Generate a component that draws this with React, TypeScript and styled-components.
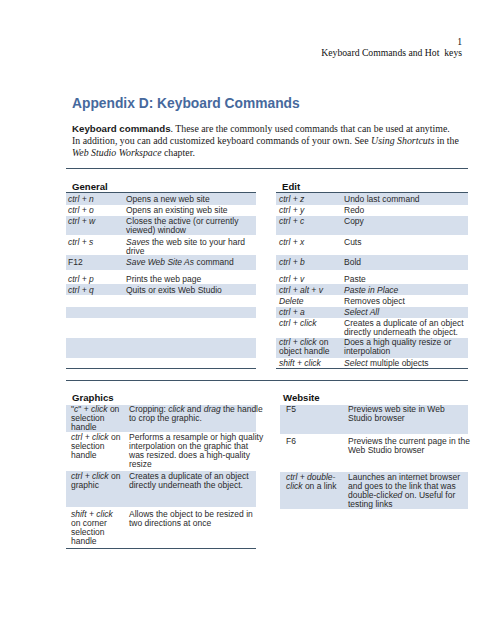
import React from "react";
import styled, { createGlobalStyle } from "styled-components";

const Global = createGlobalStyle`
  html, body { margin: 0; padding: 0; background: #ffffff; }
  body { font-family: "Liberation Serif", "Times New Roman", serif; color: #1a1a1a; }
`;

const Page = styled.div`
  width: 498px;
  height: 640px;
  box-sizing: border-box;
  padding: 37px 30px 0 66px;
  overflow: hidden;
  background: #fff;
`;

const RunningHead = styled.header`
  text-align: right;
  padding-right: 6px;
  font-family: "Liberation Serif", "Times New Roman", serif;
  font-size: 9.7px;
  line-height: 10.8px;
  color: #111;
  white-space: pre;
`;

const Title = styled.h1`
  margin: 37px 0 0 6px;
  font-family: "Liberation Sans", Arial, sans-serif;
  font-weight: bold;
  font-size: 13.8px;
  line-height: 16px;
  color: #46699d;
`;

const Intro = styled.p`
  margin: 11px 0 0 6px;
  font-family: "Liberation Serif", "Times New Roman", serif;
  font-size: 9.85px;
  line-height: 12.3px;
  color: #1a1a1a;
  white-space: nowrap;
`;

const Lead = styled.b`
  font-family: "Liberation Sans", Arial, sans-serif;
  font-weight: bold;
  font-size: 9.7px;
`;

const Rule = styled.hr<{ $top: number }>`
  margin: ${(p) => p.$top}px 0 0 0;
  border: 0;
  border-top: 1px solid #3f5568;
  height: 0;
`;

const Section = styled.section<{ $cols: string; $top: number }>`
  display: grid;
  grid-template-columns: ${(p) => p.$cols};
  align-items: start;
  margin-top: ${(p) => p.$top}px;
`;

const TableBlock = styled.div<{ $lined: boolean }>`
  display: flex;
  flex-direction: column;
  border-bottom: ${(p) => (p.$lined ? "1px solid #3f5568" : "0")};
`;

const Heading = styled.div<{ $pad: number; $lined: boolean }>`
  font-family: "Liberation Sans", Arial, sans-serif;
  font-weight: bold;
  font-size: 9.6px;
  line-height: 11px;
  color: #111;
  padding-left: ${(p) => p.$pad}px;
  margin-bottom: ${(p) => (p.$lined ? 0 : 2)}px;
  border-bottom: ${(p) => (p.$lined ? "1px solid #3f5568" : "0")};
`;

const Row = styled.div<{ $key: number; $h: number }>`
  display: grid;
  grid-template-columns: ${(p) => p.$key}px 1fr;
  height: ${(p) => p.$h}px;
  &:nth-child(odd) { background: #d6dfec; }
`;

const Cell = styled.div<{ $pad: number; $pt: number }>`
  padding: ${(p) => p.$pt}px 0 0 ${(p) => p.$pad}px;
  font-family: "Liberation Sans", Arial, sans-serif;
  font-size: 8.5px;
  line-height: 9px;
  color: #2a2a2a;
  white-space: nowrap;
`;

const Rows = styled.div`
  display: flex;
  flex-direction: column;
`;

type RowData = { k: React.ReactNode; d: React.ReactNode; h: number; pt?: number };

type TableProps = {
  title: string;
  rows: RowData[];
  keyW: number;
  kPad: number;
  dPad: number;
  hPad: number;
  headLine: boolean;
  bottomLine: boolean;
};

const Table = ({ title, rows, keyW, kPad, dPad, hPad, headLine, bottomLine }: TableProps) => (
  <TableBlock $lined={bottomLine}>
    <Heading $pad={hPad} $lined={headLine}>{title}</Heading>
    <Rows>
      {rows.map((r, i) => (
        <Row key={i} $key={keyW} $h={r.h}>
          <Cell $pad={kPad} $pt={r.pt ?? 2}>{r.k}</Cell>
          <Cell $pad={dPad} $pt={r.pt ?? 2}>{r.d}</Cell>
        </Row>
      ))}
    </Rows>
  </TableBlock>
);

const I = styled.i`
  font-style: italic;
`;

const general: RowData[] = [
  { k: <I>ctrl + n</I>, d: "Opens a new web site", h: 12 },
  { k: <I>ctrl + o</I>, d: "Opens an existing web site", h: 11, pt: 1 },
  { k: <I>ctrl + w</I>, d: <>Closes the active (or currently<br />viewed) window</>, h: 19, pt: 1 },
  { k: <I>ctrl + s</I>, d: <><I>Saves</I> the web site to your hard<br />drive</>, h: 20, pt: 3 },
  { k: "F12", d: <><I>Save Web Site As</I>{"  command"}</>, h: 15, pt: 3 },
  { k: <I>ctrl + p</I>, d: "Prints the web page", h: 14, pt: 5 },
  { k: <I>ctrl + q</I>, d: "Quits or exits Web Studio", h: 11 },
  { k: "", d: "", h: 12 },
  { k: "", d: "", h: 11 },
  { k: "", d: "", h: 20 },
  { k: "", d: "", h: 20 },
  { k: "", d: "", h: 10 },
];

const edit: RowData[] = [
  { k: <I>ctrl + z</I>, d: "Undo last command", h: 12 },
  { k: <I>ctrl + y</I>, d: "Redo", h: 11, pt: 1 },
  { k: <I>ctrl + c</I>, d: "Copy", h: 19, pt: 1 },
  { k: <I>ctrl + x</I>, d: "Cuts", h: 20, pt: 3 },
  { k: <I>ctrl + b</I>, d: "Bold", h: 15, pt: 3 },
  { k: <I>ctrl + v</I>, d: "Paste", h: 14, pt: 5 },
  { k: <I>ctrl + alt + v</I>, d: <I>Paste in Place</I>, h: 11 },
  { k: <I>Delete</I>, d: "Removes object", h: 12, pt: 2 },
  { k: <I>ctrl + a</I>, d: <I>Select All</I>, h: 11, pt: 1 },
  { k: <I>ctrl + click</I>, d: <>Creates a duplicate of an object<br />directly underneath the object.</>, h: 20, pt: 1 },
  { k: <><I>ctrl + click</I> on<br />object handle</>, d: <>Does a high quality resize or<br />interpolation</>, h: 20, pt: 0 },
  { k: <I>shift + click</I>, d: <><I>Select</I> multiple objects</>, h: 10, pt: 1 },
];

const graphics: RowData[] = [
  {
    k: <>"<I>c</I>" + <I>click</I> on<br />selection<br />handle</>,
    d: <>Cropping: <I>click</I> and <I>drag</I> the handle<br />to crop the graphic.</>,
    h: 27,
    pt: 0,
  },
  {
    k: <><I>ctrl + click</I> on<br />selection<br />handle</>,
    d: <>Performs a resample or high quality<br />interpolation on the graphic that<br />was resized. does a high-quality<br />resize</>,
    h: 39,
    pt: 1,
  },
  {
    k: <><I>ctrl + click</I> on<br />graphic</>,
    d: <>Creates a duplicate of an object<br />directly underneath the object.</>,
    h: 36,
    pt: 1,
  },
  {
    k: <><I>shift + click</I><br />on corner<br />selection<br />handle</>,
    d: <>Allows the object to be resized in<br />two directions at once</>,
    h: 41,
    pt: 3,
  },
];

const website: RowData[] = [
  { k: "F5", d: <>Previews web site in Web<br />Studio browser</>, h: 29, pt: 0 },
  { k: "F6", d: <>Previews the current page in the<br />Web Studio browser</>, h: 38, pt: 3 },
  {
    k: <><I>ctrl + double-</I><br /><I>click</I> on a link</>,
    d: <>Launches an internet browser<br />and goes to the link that was<br />double-click<I>ed</I> on. Useful for<br />testing links</>,
    h: 37,
    pt: 1,
  },
];

export default function App() {
  return (
    <>
      <Global />
      <Page>
        <RunningHead>
          1<br />
          {"Keyboard Commands and Hot  keys"}
        </RunningHead>
        <Title>Appendix D: Keyboard Commands</Title>
        <Intro>
          <Lead>Keyboard commands</Lead>. These are the commonly used commands that can be used at anytime.
          <br />
          In addition, you can add customized keyboard commands of your own. See <I>Using Shortcuts</I> in the
          <br />
          <I>Web Studio Workspace</I> chapter.
        </Intro>
        <Rule $top={9} />
        <Section $cols="190px 20px 192px" $top={12}>
          <Table title="General" rows={general} keyW={54} kPad={2} dPad={6} hPad={6} headLine bottomLine />
          <div />
          <Table title="Edit" rows={edit} keyW={62} kPad={3} dPad={6} hPad={6} headLine bottomLine />
        </Section>
        <Rule $top={11} />
        <Section $cols="190px 24px 188px" $top={11}>
          <Table title="Graphics" rows={graphics} keyW={58} kPad={5} dPad={5} hPad={6} headLine={false} bottomLine />
          <div />
          <Table title="Website" rows={website} keyW={62} kPad={6} dPad={6} hPad={3} headLine={false} bottomLine={false} />
        </Section>
      </Page>
    </>
  );
}
